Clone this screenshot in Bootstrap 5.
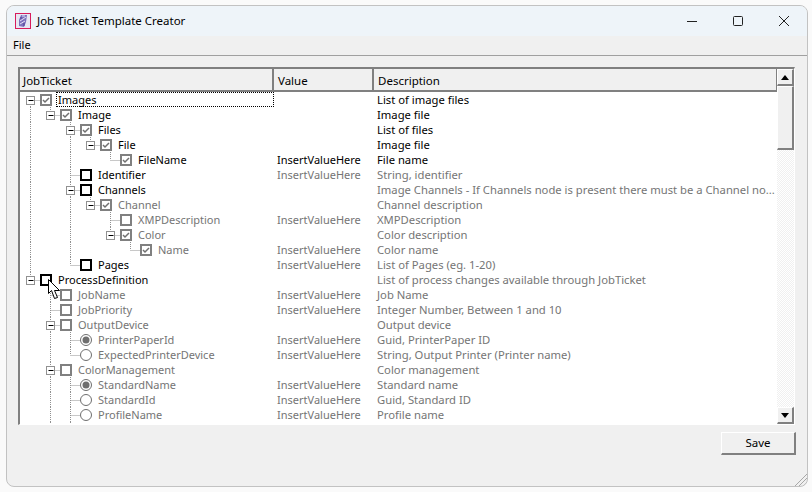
<!doctype html>
<html lang="en">
<head>
  <meta charset="UTF-8">
  <title>Job Ticket Template Creator</title>
  <link rel="stylesheet" href="https://cdn.jsdelivr.net/npm/bootstrap@5.3.0/dist/css/bootstrap.min.css">
  <style>
    html, body { height: 100%; overflow: hidden; }
    body { background: #fafafa; padding: 5px 4px 5px 6px; font-family: "Noto Sans", "Open Sans", sans-serif; font-size: 11px; color: #000; }
    .app-window { width: 802px; height: 482px; background: #f0f0f0; border: 1px solid #c2c2c2; border-radius: 8px; overflow: hidden; position: relative; }
    .title-bar { height: 30px; background: #eef4f9; padding-left: 8px; font-size: 11.5px; }
    .title-text { margin-left: 6px; }
    .win-btns { margin-left: auto; }
    .win-btn { width: 46px; height: 30px; }
    .menu-strip { height: 20px; padding-left: 6px; border-bottom: 1px solid #a0a0a0; line-height: 17px; }
    .main-area { padding: 11px 12px 0 11px; }
    .tree-box { width: 777px; height: 358px; border-top: 2px solid #808080; border-left: 2px solid #808080; border-right: 1px solid #fff; border-bottom: 1px solid #fff; }
    .tree-main { width: 757px; }
    .head-row { height: 23px; background: #f0f0f0; border-bottom: 2px solid #808080; border-right: 1px solid #808080; line-height: 23px; font-size: 11.5px; }
    .head-cell { padding-left: 3px; border-right: 2px solid #808080; }
    .head-name { width: 254px; }
    .head-value { width: 100px; padding-left: 4px; }
    .head-desc { flex: 1; border-right: 0; padding-left: 4px; }
    .tree-body { height: 332px; background: #fff; overflow: hidden; }
    .tree-row { height: 15px; line-height: 15px; white-space: nowrap; }
    .name-col { width: 254px; }
    .val-col { width: 100px; padding-left: 3px; }
    .desc-col { width: 403px; padding-left: 3px; overflow: hidden; font-size: 11.25px; }
    .node-label { padding: 0 2px 0 1px; border: 1px dotted transparent; height: 15px; line-height: 13px; }
    .node-label.focused { border-color: #000; flex: 1; }
    .dim { color: #757575; }
    .scroll-col { width: 17px; background-color: #fff; background-image: conic-gradient(#f0f0f0 25%, #fff 0 50%, #f0f0f0 0 75%, #fff 0); background-size: 2px 2px; }
    .sb-btn { height: 17px; background: #f0f0f0; border: 1px solid #fff; border-right: 2px solid #808080; border-bottom: 2px solid #808080; }
    .sb-thumb { height: 64px; background: #f0f0f0; border: 1px solid #fff; border-right: 2px solid #808080; border-bottom: 2px solid #808080; }
    .btn-row { padding: 7px 0 0 0; width: 778px; }
    .save-btn { width: 75px; height: 23px; padding: 0; font-size: 11.5px; color: #000; background: #f0f0f0; border: 1px solid #fff; border-right: 2px solid #808080; border-bottom: 2px solid #808080; border-radius: 0; line-height: 18px; }
    .size-grip { position: absolute; right: 0; bottom: 0; }
    .mouse-arrow { position: absolute; left: 40px; top: 272px; }
  </style>
</head>
<body>
<div class="app-window d-flex flex-column">
  <div class="title-bar d-flex align-items-center">
    <svg width="16" height="16" viewBox="0 0 16 16">
      <rect width="16" height="16" fill="#e6e6f2"/>
      <path d="M6 2 L12 2 L11 9 L9 14 L4 13 L4 7 Z" fill="#7d70bc"/>
      <path d="M5 8 L11 4 M5 11 L10 8 M7 3 L10 3" stroke="#e4e0f2" stroke-width="1"/>
      <path d="M5 5 h2 M9 10 v3" stroke="#4c3f8f" stroke-width="1"/>
      <rect x=".5" y=".5" width="15" height="15" fill="none" stroke="#d81b5c"/>
    </svg>
    <span class="title-text">Job Ticket Template Creator</span>
    <div class="win-btns d-flex">
      <div class="win-btn d-flex align-items-center justify-content-center">
        <svg width="10" height="10" viewBox="0 0 10 10"><path d="M0 5.5H10" stroke="#222"/></svg>
      </div>
      <div class="win-btn d-flex align-items-center justify-content-center">
        <svg width="10" height="10" viewBox="0 0 10 10"><rect x=".5" y=".5" width="9" height="9" rx="1" fill="none" stroke="#222"/></svg>
      </div>
      <div class="win-btn d-flex align-items-center justify-content-center">
        <svg width="10" height="10" viewBox="0 0 10 10"><path d="M0 0L10 10M10 0L0 10" stroke="#222"/></svg>
      </div>
    </div>
  </div>
  <div class="menu-strip">File</div>

  <div class="main-area">
    <div class="tree-box d-flex">
      <div class="tree-main">
        <div class="head-row d-flex">
          <div class="head-cell head-name">JobTicket</div>
          <div class="head-cell head-value">Value</div>
          <div class="head-cell head-desc">Description</div>
        </div>
        <div class="tree-body" id="treeBody"></div>
      </div>
      <div class="scroll-col d-flex flex-column">
        <div class="sb-btn d-flex align-items-center justify-content-center">
          <svg width="8" height="5" viewBox="0 0 8 5"><path d="M4 0L8 5H0Z"/></svg>
        </div>
        <div class="sb-thumb"></div>
        <div class="sb-btn d-flex align-items-center justify-content-center mt-auto">
          <svg width="8" height="5" viewBox="0 0 8 5"><path d="M0 0H8L4 5Z"/></svg>
        </div>
      </div>
    </div>
    <div class="btn-row d-flex justify-content-end">
      <button class="btn save-btn">Save</button>
    </div>
  </div>

  <svg class="size-grip" width="14" height="14" viewBox="0 0 14 14">
    <path d="M2 14L14 2M6 14L14 6M10 14L14 10" stroke="#a8a8a8" fill="none"/>
  </svg>
  <svg class="mouse-arrow" width="16" height="23" viewBox="0 0 16 23">
    <path d="M1.500 1.500V15.500L4.500 12.500L7.500 20.500L10.500 19.500L7.500 12.500H12.500Z" fill="#fff" stroke="#000"/>
  </svg>
</div>

<script>
// [label, depth, node kind, expandable, value, description, text tone]
// kind: c = ticked, b = empty black, g = empty grey, r = radio, R = radio on
const V = 'InsertValueHere';
const rows = [
  ['Images', 0, 'c', 1, '', 'List of image files', 'kkk'],
  ['Image', 1, 'c', 1, '', 'Image file', 'kkk'],
  ['Files', 2, 'c', 1, '', 'List of files', 'kkk'],
  ['File', 3, 'c', 1, '', 'Image file', 'kkk'],
  ['FileName', 4, 'c', 0, V, 'File name', 'kkk'],
  ['Identifier', 2, 'b', 0, V, 'String, identifier', 'kdd'],
  ['Channels', 2, 'b', 1, '', 'Image Channels - If Channels node is present there must be a Channel no...', 'kdd'],
  ['Channel', 3, 'c', 1, '', 'Channel description', 'ddd'],
  ['XMPDescription', 4, 'g', 0, V, 'XMPDescription', 'ddd'],
  ['Color', 4, 'c', 1, '', 'Color description', 'ddd'],
  ['Name', 5, 'c', 0, V, 'Color name', 'ddd'],
  ['Pages', 2, 'b', 0, V, 'List of Pages (eg. 1-20)', 'kdd'],
  ['ProcessDefinition', 0, 'b', 1, '', 'List of process changes available through JobTicket', 'kdd'],
  ['JobName', 1, 'g', 0, V, 'Job Name', 'ddd'],
  ['JobPriority', 1, 'g', 0, V, 'Integer Number, Between 1 and 10', 'ddd'],
  ['OutputDevice', 1, 'g', 1, '', 'Output device', 'ddd'],
  ['PrinterPaperId', 2, 'R', 0, V, 'Guid, PrinterPaper ID', 'ddd'],
  ['ExpectedPrinterDevice', 2, 'r', 0, V, 'String, Output Printer (Printer name)', 'ddd'],
  ['ColorManagement', 1, 'g', 1, '', 'Color management', 'ddd'],
  ['StandardName', 2, 'R', 0, V, 'Standard name', 'ddd'],
  ['StandardId', 2, 'r', 0, V, 'Guid, Standard ID', 'ddd'],
  ['ProfileName', 2, 'r', 0, V, 'Profile name', 'ddd'],
  ['', 2, 'g', 0, '', '', 'ddd']
];

// does this node have a sibling further down? rows past the fold count for depth > 0
function hasNext(i) {
  for (let j = i + 1; j < rows.length; j++) {
    if (rows[j][1] < rows[i][1]) return false;
    if (rows[j][1] === rows[i][1]) return true;
  }
  return rows[i][1] > 0;
}

function nodeIcon(kind, x) {
  if (kind === 'r' || kind === 'R') {
    let s = `<circle cx="${x + 6}" cy="8" r="5.5" fill="#fff" stroke="#6e6e6e"/>`;
    if (kind === 'R') s += `<circle cx="${x + 6}" cy="8" r="3.500" fill="#6e6e6e"/>`;
    return s;
  }
  const col = kind === 'b' ? '#000' : '#808080';
  let s = `<rect x="${x + 1}" y="3" width="10" height="10" fill="#fff" stroke="${col}" stroke-width="2"/>`;
  if (kind === 'c') s += `<path d="M${x + 3} 8l2 2l4-4" fill="none" stroke="#707070" stroke-width="1.500"/>`;
  return s;
}

function rowSvg(i) {
  const [, d, kind, exp] = rows[i];
  const w = 36 + 20 * d;
  const cx = d2 => 10.5 + 20 * d2;
  const dot = 'stroke="#909090" stroke-dasharray="1 1" fill="none"';
  let s = '';
  // guides of open ancestors
  let level = d;
  for (let j = i - 1; j >= 0 && level > 0; j--) {
    if (rows[j][1] < level) {
      level = rows[j][1];
      if (hasNext(j)) s += `<path d="M${cx(level)} 0V15" ${dot}/>`;
    }
  }
  const top = i === 0 ? 8 : 0;
  s += `<path d="M${cx(d)} ${top}V${hasNext(i) ? 15 : 8}M${cx(d)} 8.500H${20 + 20 * d}" ${dot}/>`;
  if (exp) {
    s += `<rect x="${cx(d) - 4}" y="4.500" width="8" height="8" fill="#fff" stroke="#919191"/>`;
    s += `<path d="M${cx(d) - 2} 8.500h5" stroke="#000"/>`;
  }
  s += nodeIcon(kind, 20 + 20 * d);
  return `<svg width="${w}" height="15" viewBox="0 0 ${w} 15" class="flex-shrink-0">${s}</svg>`;
}

document.getElementById('treeBody').innerHTML = rows.map((r, i) => {
  const tone = r[6];
  const cl = n => tone[n] === 'd' ? 'dim' : '';
  return `<div class="tree-row d-flex">
    <div class="name-col d-flex">${rowSvg(i)}<span class="node-label ${cl(0)} ${i === 0 ? 'focused' : ''}">${r[0]}</span></div>
    <div class="val-col ${cl(1)}">${r[4]}</div>
    <div class="desc-col ${cl(2)}">${r[5]}</div>
  </div>`;
}).join('');
</script>
</body>
</html>
